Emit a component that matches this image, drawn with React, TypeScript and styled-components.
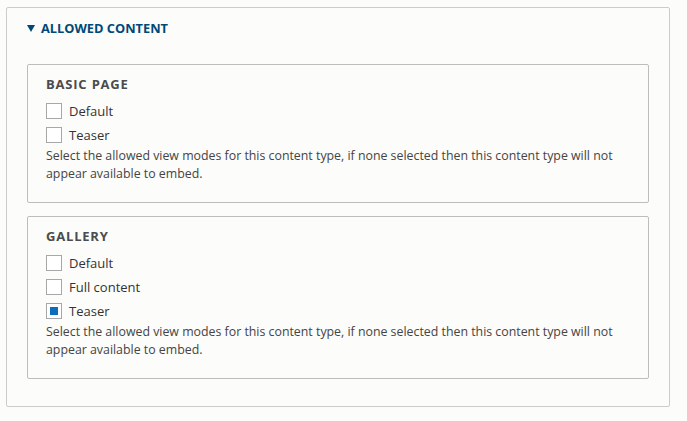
import React from "react";
import styled, { createGlobalStyle } from "styled-components";

const GlobalStyle = createGlobalStyle`
  html, body {
    margin: 0;
    padding: 0;
    background: #fcfcfa;
  }
  body {
    font-family: "Open Sans", "Liberation Sans", sans-serif;
    font-size: 13px;
    color: #333;
  }
`;

const Page = styled.div`
  padding: 7px 18px 0 6px;
`;

const Details = styled.div`
  border: 1px solid #ccc;
  border-radius: 2px;
  background: #fcfcfa;
  width: 662px;
`;

const Summary = styled.div`
  display: flex;
  align-items: center;
  gap: 6px;
  padding: 11px 20px;
  line-height: 18px;
  font-size: 12.8px;
  font-weight: 700;
  text-transform: uppercase;
  color: #004875;
`;

const Arrow = styled.span`
  width: 0;
  height: 0;
  margin-top: 1px;
  border-left: 4px solid transparent;
  border-right: 4px solid transparent;
  border-top: 7px solid #004875;
`;

const Content = styled.div`
  display: flex;
  flex-direction: column;
  gap: 13px;
  padding: 16px 20px 27px;
`;

const Fieldset = styled.div`
  border: 1px solid #bdbdbd;
  border-radius: 2px;
  padding: 10px 18px 19px;
`;

const Legend = styled.div`
  font-size: 13px;
  font-weight: 700;
  letter-spacing: 0.8px;
  line-height: 18px;
  text-transform: uppercase;
  color: #4b4b4b;
  margin-bottom: 6px;
`;

const Row = styled.label`
  display: flex;
  align-items: center;
  gap: 7px;
  height: 24px;
  line-height: 18px;
  color: #333;
`;

const Box = styled.span<{ $checked?: boolean }>`
  box-sizing: border-box;
  width: 16px;
  height: 16px;
  border: 1px solid #a8a8a8;
  background: #fff;
  display: flex;
  align-items: center;
  justify-content: center;
  &::after {
    content: "";
    width: 8px;
    height: 8px;
    background: ${(p) => (p.$checked ? "#0a6ebd" : "transparent")};
  }
`;

const Description = styled.div`
  font-size: 12.35px;
  line-height: 18px;
  color: #444;
  max-width: 590px;
`;

type Group = { title: string; options: { label: string; checked?: boolean }[] };

const groups: Group[] = [
  { title: "Basic page", options: [{ label: "Default" }, { label: "Teaser" }] },
  {
    title: "Gallery",
    options: [{ label: "Default" }, { label: "Full content" }, { label: "Teaser", checked: true }],
  },
];

export default function App() {
  return (
    <>
      <GlobalStyle />
      <Page>
        <Details>
          <Summary>
            <Arrow />
            Allowed content
          </Summary>
          <Content>
            {groups.map((g) => (
              <Fieldset key={g.title}>
                <Legend>{g.title}</Legend>
                {g.options.map((o) => (
                  <Row key={o.label}>
                    <Box $checked={o.checked} />
                    {o.label}
                  </Row>
                ))}
                <Description>
                  Select the allowed view modes for this content type, if none selected then this
                  content type will not appear available to embed.
                </Description>
              </Fieldset>
            ))}
          </Content>
        </Details>
      </Page>
    </>
  );
}
